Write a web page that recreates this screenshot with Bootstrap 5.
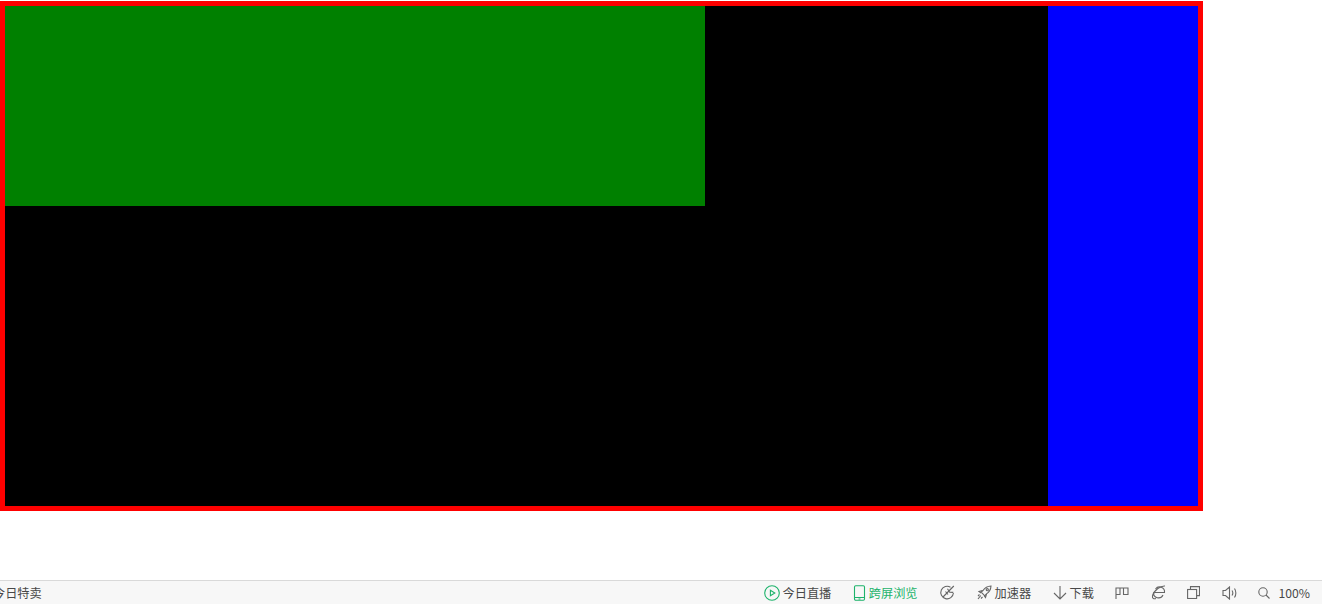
<!DOCTYPE html>
<html lang="zh-CN">
<head>
<meta charset="utf-8">
<title>Layout</title>
<link href="https://cdn.jsdelivr.net/npm/bootstrap@5.3.0/dist/css/bootstrap.min.css" rel="stylesheet">
<style>
html,body{height:100%;margin:0;overflow:hidden;background:#fff}
.page-wrap{height:100vh}
.outer-box{width:1203px;height:510px;margin-top:1px;border:5px solid #f00;background:#000}
.main-area{width:1043px}
.green-block{width:700px;height:200px;background:#008000}
.blue-side{width:150px;background:#00f}
.status-strip{height:24px;background:#f7f7f7;border-top:1px solid #d9d9d9;font:12.2px/22px "Noto Sans CJK SC","Liberation Sans",sans-serif;color:#484848;white-space:nowrap;padding-right:12px}
.status-left{margin-left:-7px}
.status-group{gap:21.5px}
.status-cell{gap:3px}
.status-strip svg{fill:none;stroke:#666;stroke-width:1.1;display:block;flex:none}
.green-txt{color:#1db36b}
.status-strip svg.green-ico{stroke:#1db36b}
</style>
</head>
<body>
<div class="page-wrap d-flex flex-column">
  <div class="outer-box d-flex">
    <div class="main-area"><div class="green-block"></div></div>
    <div class="blue-side"></div>
  </div>
  <div class="status-strip mt-auto d-flex align-items-center justify-content-between">
    <span class="status-left">今日特卖</span>
    <div class="status-group d-flex align-items-center">
      <div class="status-cell d-flex align-items-center"><svg class="green-ico" width="16" height="16" viewBox="0 0 16 16"><circle cx="8" cy="8" r="7.3"/><path d="M6.4 5.2v5.6l4.4-2.8z"/></svg><span>今日直播</span></div>
      <div class="status-cell d-flex align-items-center green-txt"><svg class="green-ico" width="13" height="16" viewBox="0 0 13 16"><rect x="1.5" y=".8" width="10" height="14.4" rx="1.2"/><path d="M1.5 12.5h10M5.5 14h2"/></svg><span>跨屏浏览</span></div>
      <svg width="16" height="15" viewBox="0 0 16 15"><path d="M11.5 2.2A6.3 6.3 0 1 0 14.4 8"/><path d="M14.8 1 4 12M8.5 3.8l2.2 3.4 3.6.2M6.5 6.5 9 9.5"/></svg>
      <div class="status-cell d-flex align-items-center"><svg width="15" height="15" viewBox="0 0 15 15"><path d="M14 1c-3.5.2-6 1.600-8 4.500L4 7l3.800 3.800 1.700-1.900C12.500 7 13.800 4.500 14 1z"/><path d="M5.500 5.500 2 6.500l2 1.500M9.500 9l-1 3.500L7 10.500M3.800 10.500 1 14M2.500 9.500 1 11M5.500 12 4 13.500"/><circle cx="10.300" cy="4.700" r="1.100"/></svg><span>加速器</span></div>
      <div class="status-cell d-flex align-items-center"><svg width="14" height="15" viewBox="0 0 14 15"><path d="M7 1v13M1 8l6 6 6-6"/></svg><span>下载</span></div>
      <svg width="14" height="14" viewBox="0 0 14 14"><path d="M1 13V2h12v6.500H8.500V2M5 2v6.500H1"/></svg>
      <svg width="15" height="15" viewBox="0 0 15 15"><path d="M2.500 7.500h11A5 5 0 0 0 4.500 4M2.500 7.500a5 5 0 0 0 9.500 2.500"/><path d="M14 1C10 .5 3 5 1.500 11c-.5 2.500 1.500 3.200 3.500 2.500"/></svg>
      <svg width="13" height="13" viewBox="0 0 13 13"><rect x=".6" y="3.500" width="9" height="9"/><path d="M3.500 3.500V.6h9v9H9.600"/></svg>
      <svg width="15" height="14" viewBox="0 0 15 14"><path d="M1 4.500v5h2.500L7.500 13V1L3.500 4.500zM10 4.500c1 1.500 1 3.500 0 5M12.500 2.500c1.800 2.500 1.800 6.500 0 9"/></svg>
      <div class="status-cell d-flex align-items-center gap-1"><svg width="12" height="12" viewBox="0 0 12 12"><circle cx="5" cy="5" r="4.200"/><path d="m8 8 3.500 3.500"/></svg><span class="ms-1">100%</span></div>
    </div>
  </div>
</div>
</body>
</html>
